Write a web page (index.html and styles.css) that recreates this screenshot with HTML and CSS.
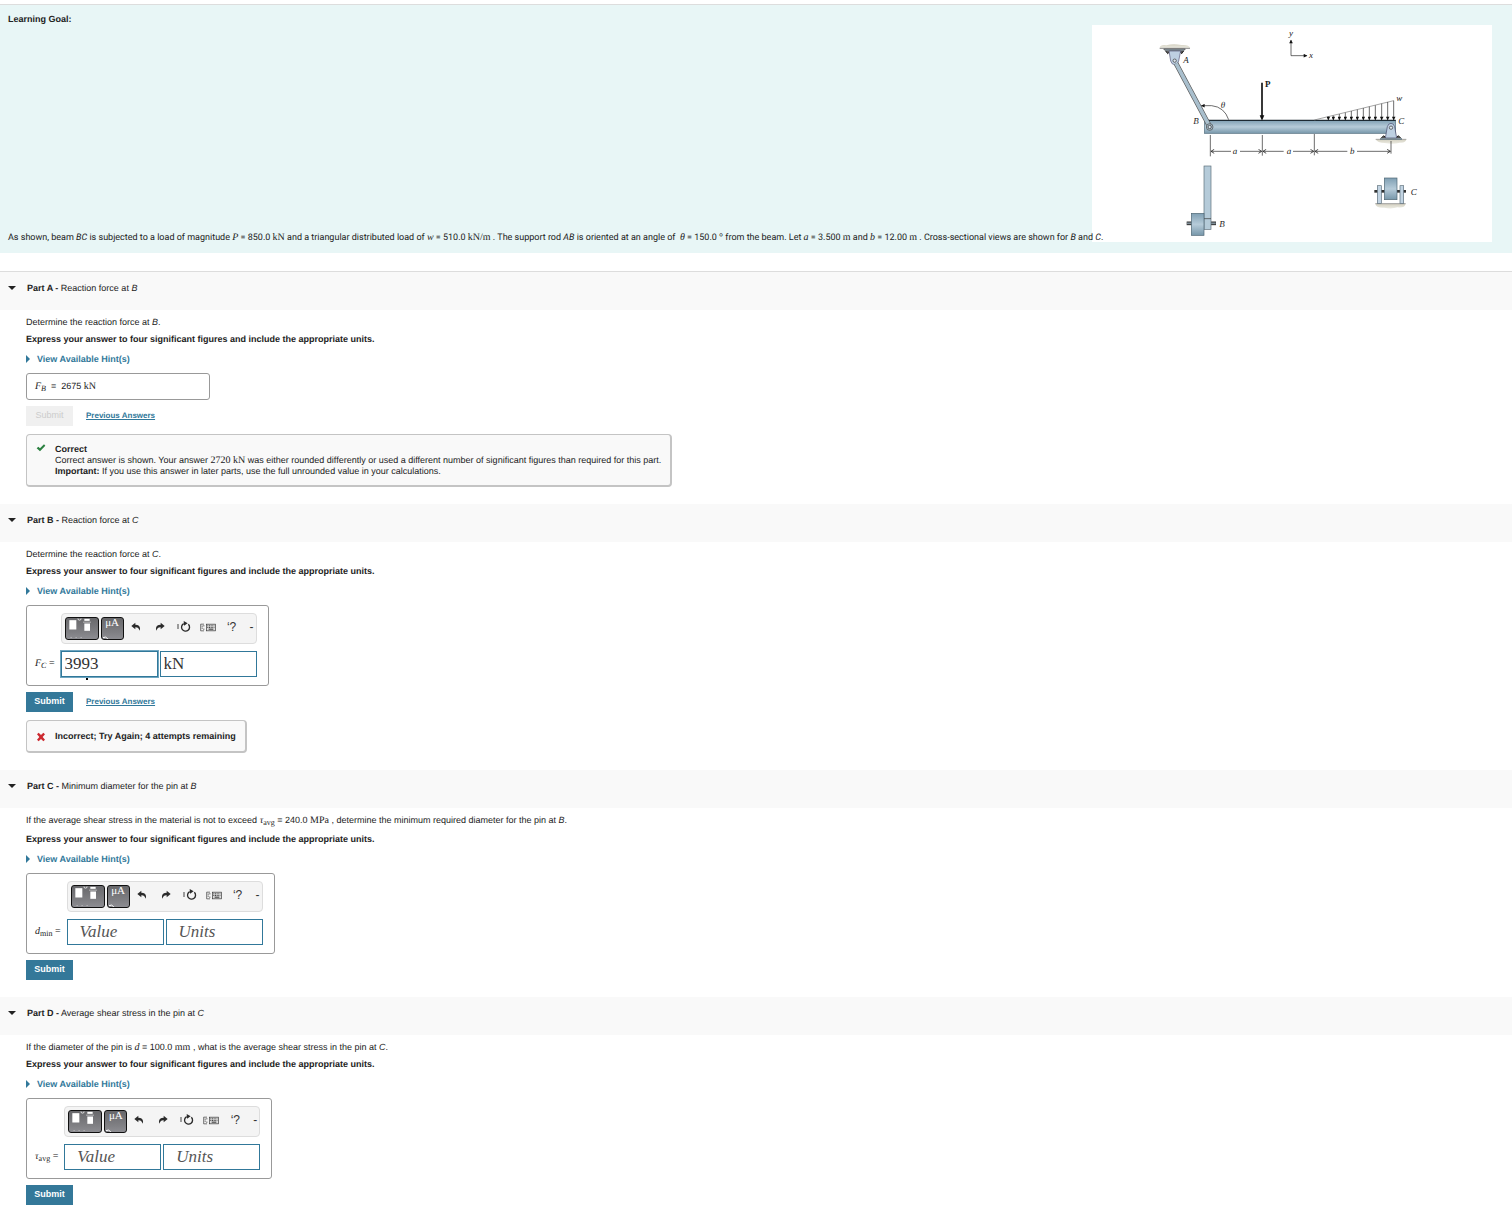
FILE: index.html
```
<!DOCTYPE html>
<html lang="en">
<head>
    <meta charset="utf-8">
    <meta name="viewport" content="width=device-width, initial-scale=1.0">
    <title>Beam BC - Reaction forces and shear stress</title>
    <link rel="stylesheet" href="styles.css">
</head>
<body>
    <!-- shared toolbar icons -->
    <svg class="sprite" aria-hidden="true">
        <symbol id="i-template" viewBox="3 3 96 60">
            <rect x="13" y="8" width="21" height="28" fill="#fff"/>
            <path d="M39 3v3q5 4 9 0V3" fill="none" stroke="#ddd" stroke-width="3"/>
            <rect x="58" y="4" width="16" height="6" fill="#fff"/>
            <path d="M54 14h24" stroke="#ddd" stroke-width="2"/>
            <rect x="58" y="18" width="17" height="22" fill="#fff"/>
            <path d="M16 60h5M31 60h5M46 60h5" stroke="#bbb" stroke-width="2"/>
        </symbol>
        <symbol id="i-hook" viewBox="0 0 24 12">
            <path d="M3 5q8-5 14 3l1 3" fill="none" stroke="#fff" stroke-width="3"/>
        </symbol>
        <symbol id="i-undo" viewBox="0 0 30 30">
            <path d="M13 2L1 12l12 10v-6q9-1 13 10q5-17-13-18z" fill="#2b2b2b"/>
        </symbol>
        <symbol id="i-redo" viewBox="0 0 30 30">
            <path d="M17 2l12 10-12 10v-6q-9-1-13 10Q-1 9 17 8z" fill="#2b2b2b"/>
        </symbol>
        <symbol id="i-reset" viewBox="0 0 42 36">
            <path d="M3 9v15" stroke="#444" stroke-width="3"/>
            <path d="M34 10a12 12 0 1 1-14-2" fill="none" stroke="#2b2b2b" stroke-width="4"/>
            <path d="M20 0l12 7-11 7z" fill="#2b2b2b"/>
        </symbol>
        <symbol id="i-keyboard" viewBox="0 0 48 26">
            <path d="M12 3H2v20h10" fill="none" stroke="#333" stroke-width="2"/>
            <path d="M5 9h3M5 15h3M10 8h3M10 18h3" stroke="#333" stroke-width="3"/>
            <rect x="19" y="3" width="27" height="20" fill="#ddd" stroke="#333" stroke-width="2"/>
            <path d="M22 8h21M22 13h21" stroke="#444" stroke-width="3" stroke-dasharray="3 2"/>
            <path d="M26 18h14" stroke="#333" stroke-width="3"/>
        </symbol>
    </svg>

    <section class="goal">
        <h2 class="goal-title">Learning Goal:</h2>
        <div class="goal-row">
            <p class="goal-text">As shown, beam <i>BC</i> is subjected to a load of magnitude <span class="math"><i>P</i></span> = 850.0 <span class="math">kN</span> and a triangular distributed load of <span class="math"><i>w</i></span> = 510.0 <span class="math">kN/m</span> . The support rod <i>AB</i> is oriented at an angle of &nbsp;<span class="math"><i>θ</i></span> = 150.0 <span class="math">°</span> from the beam. Let <span class="math"><i>a</i></span> = 3.500 <span class="math">m</span> and <span class="math"><i>b</i></span> = 12.00 <span class="math">m</span> . Cross-sectional views are shown for <i>B</i> and <i>C</i>.</p>
            <svg class="figure" viewBox="0 15 1200 651" role="img" aria-label="Beam BC held by rod AB and a pin at C">
                <defs>
                    <linearGradient id="steel" x2="0" y2="1">
                        <stop offset="0" stop-color="#7f9fb3"/>
                        <stop offset=".5" stop-color="#b6cbd9"/>
                        <stop offset="1" stop-color="#7797aa"/>
                    </linearGradient>
                    <linearGradient id="ground" x2="0" y2="1">
                        <stop offset="0" stop-color="#d3d0c0"/>
                        <stop offset="1" stop-color="#ecebe3"/>
                    </linearGradient>
                    <marker id="tip" viewBox="0 0 10 10" refX="9" refY="5" markerUnits="userSpaceOnUse" markerWidth="13" markerHeight="11" orient="auto-start-reverse">
                        <path d="M0 0l10 5-10 5z" fill="#111"/>
                    </marker>
                    <marker id="open" viewBox="0 0 10 10" refX="9" refY="5" markerUnits="userSpaceOnUse" markerWidth="12" markerHeight="14" orient="auto-start-reverse">
                        <path d="M1 0l8 5-8 5" fill="none" stroke="#222" stroke-width="2"/>
                    </marker>
                </defs>

                <!-- axes -->
                <path d="M597 60v47h48" class="thin" marker-start="url(#tip)" marker-end="url(#tip)"/>

                <!-- support A -->
                <path d="M203 84q2-11 20-8q20-6 45-1q22-2 27 9z" fill="url(#ground)"/>
                <path d="M203 85h91" stroke="#888" stroke-width="3"/>
                <path d="M215 87h65l-6 6h-53z" fill="#91a2ad" stroke="#444" stroke-width="2"/>
                <path d="M221 93l6 8 7-7M262 93l7 8 6-8" fill="#555" stroke="#222" stroke-width="3"/>
                <path d="M231 93h35l-6 30q-3 11-12 11t-12-11z" fill="#bed0e2" stroke="#557" stroke-width="2"/>

                <!-- beam -->
                <rect x="337" y="301" width="574" height="39" fill="url(#steel)" stroke="#55707f" stroke-width="2"/>
                <path d="M337 301h574" stroke="#1d2a33" stroke-width="4"/>

                <!-- rod AB -->
                <path d="M252 130L350 314" stroke="#555" stroke-width="15"/>
                <path d="M252 130L350 314" stroke="#a9bfcd" stroke-width="11"/>
                <circle cx="248" cy="122" r="5" fill="#dde6ee" stroke="#333" stroke-width="2"/>
                <circle cx="353" cy="321" r="10" fill="#a9bfcd" stroke="#444" stroke-width="2"/>
                <circle cx="353" cy="321" r="5" fill="#dde6ee" stroke="#222" stroke-width="2"/>

                <!-- angle and load P -->
                <path d="M328 257h31q38 4 51 42" fill="none" stroke="#222" stroke-width="2" marker-start="url(#tip)"/>
                <path d="M510 188v103" stroke="#111" stroke-width="5"/>
                <path d="M503 286h14l-7 16z" fill="#111"/>

                <!-- distributed load w -->
                <path d="M667 300L905 242" stroke="#777" stroke-width="2"/>
                <g class="thin">
                    <path d="M709 290v10" marker-end="url(#tip)"/>
                    <path d="M724 287v13" marker-end="url(#tip)"/>
                    <path d="M742 282v18" marker-end="url(#tip)"/>
                    <path d="M760 278v22" marker-end="url(#tip)"/>
                    <path d="M778 273v27" marker-end="url(#tip)"/>
                    <path d="M796 269v31" marker-end="url(#tip)"/>
                    <path d="M814 264v36" marker-end="url(#tip)"/>
                    <path d="M832 260v40" marker-end="url(#tip)"/>
                    <path d="M850 256v44" marker-end="url(#tip)"/>
                    <path d="M869 251v49" marker-end="url(#tip)"/>
                    <path d="M887 246v54" marker-end="url(#tip)"/>
                    <path d="M905 242v58" marker-end="url(#tip)"/>
                </g>

                <!-- support C -->
                <path d="M851 358h92q-2 12-20 10q-20 6-45 1q-22 0-27-11z" fill="url(#ground)"/>
                <path d="M851 358h92" stroke="#888" stroke-width="2"/>
                <path d="M868 354l7-7 7 7M912 354l7-7 7 7" fill="#555" stroke="#222" stroke-width="3"/>
                <path d="M880 354l6-34q3-10 11-10t11 10l6 34z" fill="#bed0e2" stroke="#446" stroke-width="2"/>
                <path d="M864 357h66" stroke="#6c7d88" stroke-width="5"/>
                <circle cx="897" cy="323" r="5" fill="#dde6ee" stroke="#333" stroke-width="2"/>

                <!-- dimensions -->
                <path d="M355 345v64M511 345v62M667 342v64M897 363v38" class="thin"/>
                <path d="M417 394h-60" class="thin" marker-end="url(#open)"/>
                <path d="M444 394h65" class="thin" marker-end="url(#open)"/>
                <path d="M575 394h-62" class="thin" marker-end="url(#open)"/>
                <path d="M603 394h62" class="thin" marker-end="url(#open)"/>
                <path d="M766 394h-97" class="thin" marker-end="url(#open)"/>
                <path d="M795 394h100" class="thin" marker-end="url(#open)"/>

                <!-- section at B -->
                <path d="M284 610h88" stroke="#333" stroke-width="11"/>
                <path d="M285 610h86" stroke="#81909a" stroke-width="5"/>
                <rect x="336" y="438" width="21" height="190" fill="#b5cbd9" stroke="#5b6d78" stroke-width="2"/>
                <path d="M336 596h21" stroke="#333" stroke-width="2"/>
                <rect x="298" y="580" width="38" height="66" fill="url(#steel)" stroke="#4d6572" stroke-width="2"/>

                <!-- section at C -->
                <path d="M850 551h91q-3 14-24 11q-20 6-40 1q-25 2-27-12z" fill="url(#ground)"/>
                <path d="M850 551h91" stroke="#777" stroke-width="2"/>
                <path d="M847 514h95" stroke="#333" stroke-width="8"/>
                <rect x="856" y="497" width="12" height="53" fill="#c2d4e3" stroke="#5b6d78" stroke-width="2"/>
                <rect x="924" y="497" width="11" height="53" fill="#c2d4e3" stroke="#5b6d78" stroke-width="2"/>
                <rect x="877" y="474" width="38" height="65" fill="url(#steel)" stroke="#4d6572" stroke-width="2"/>

                <g class="fig-label">
                    <text x="591" y="49">y</text>
                    <text x="651" y="114">x</text>
                    <text x="274" y="128">A</text>
                    <text x="386" y="263">θ</text>
                    <text x="304" y="311">B</text>
                    <text x="519" y="201" class="bold">P</text>
                    <text x="913" y="242">w</text>
                    <text x="919" y="311">C</text>
                    <text x="422" y="401">a</text>
                    <text x="584" y="401">a</text>
                    <text x="774" y="402">b</text>
                    <text x="382" y="622">B</text>
                    <text x="956" y="524">C</text>
                </g>
            </svg>
        </div>
    </section>

    <main class="parts">
        <section class="part">
            <h2 class="part-header"><span class="caret"></span><span><b>Part A -</b> Reaction force at <i>B</i></span></h2>
            <div class="part-body">
                <p>Determine the reaction force at <i>B</i>.</p>
                <p class="express">Express your answer to four significant figures and include the appropriate units.</p>
                <a class="hint" href="#">View Available Hint(s)</a>
                <div class="answer-fixed"><span class="math"><i>F<sub>B</sub></i></span>&nbsp; = &nbsp;2675 <span class="math">kN</span></div>
                <div class="actions">
                    <button class="submit" disabled>Submit</button>
                    <a class="previous" href="#">Previous Answers</a>
                </div>
                <div class="feedback">
                    <svg class="mark" viewBox="0 0 30 24"><path d="M2 13l5-5 5 5L24 1l4 4-16 17z" fill="#2b8040"/></svg>
                    <div>
                        <h3>Correct</h3>
                        <p>Correct answer is shown. Your answer <span class="math">2720 kN</span> was either rounded differently or used a different number of significant figures than required for this part.</p>
                        <p><b>Important:</b> If you use this answer in later parts, use the full unrounded value in your calculations.</p>
                    </div>
                </div>
            </div>
        </section>

        <section class="part">
            <h2 class="part-header"><span class="caret"></span><span><b>Part B -</b> Reaction force at <i>C</i></span></h2>
            <div class="part-body">
                <p>Determine the reaction force at <i>C</i>.</p>
                <p class="express">Express your answer to four significant figures and include the appropriate units.</p>
                <a class="hint" href="#">View Available Hint(s)</a>
                <div class="answer">
                    <div class="toolbar">
                        <button class="key wide" aria-label="Templates"><svg><use href="#i-template"/></svg></button>
                        <button class="key" aria-label="Units">μA<svg><use href="#i-hook"/></svg></button>
                        <button class="tool" aria-label="Undo"><svg><use href="#i-undo"/></svg></button>
                        <button class="tool" aria-label="Redo"><svg><use href="#i-redo"/></svg></button>
                        <button class="tool reset" aria-label="Reset"><svg><use href="#i-reset"/></svg></button>
                        <button class="tool keyboard" aria-label="Keyboard shortcuts"><svg><use href="#i-keyboard"/></svg></button>
                        <button class="tool">‘?</button>
                        <button class="tool more">-</button>
                    </div>
                    <label class="math" for="fc"><i>F<sub>C</sub></i> =</label>
                    <div class="fields">
                        <input class="field active" id="fc" value="3993">
                        <input class="field" aria-label="Units" value="kN">
                        <span class="dot"></span>
                    </div>
                </div>
                <div class="actions">
                    <button class="submit">Submit</button>
                    <a class="previous" href="#">Previous Answers</a>
                </div>
                <div class="feedback short">
                    <svg class="mark" viewBox="0 0 30 30"><path d="M3 7l5-5 7 7 7-7 5 5-7 8 7 8-5 5-7-7-7 7-5-5 7-8z" fill="#cc2a30"/></svg>
                    <b>Incorrect; Try Again; 4 attempts remaining</b>
                </div>
            </div>
        </section>

        <section class="part">
            <h2 class="part-header"><span class="caret"></span><span><b>Part C -</b> Minimum diameter for the pin at <i>B</i></span></h2>
            <div class="part-body">
                <p class="tall">If the average shear stress in the material is not to exceed <span class="math"><i>τ</i><sub>avg</sub></span> = 240.0 <span class="math">MPa</span> , determine the minimum required diameter for the pin at <i>B</i>.</p>
                <p class="express">Express your answer to four significant figures and include the appropriate units.</p>
                <a class="hint" href="#">View Available Hint(s)</a>
                <div class="answer">
                    <div class="toolbar">
                        <button class="key wide" aria-label="Templates"><svg><use href="#i-template"/></svg></button>
                        <button class="key" aria-label="Units">μA<svg><use href="#i-hook"/></svg></button>
                        <button class="tool" aria-label="Undo"><svg><use href="#i-undo"/></svg></button>
                        <button class="tool" aria-label="Redo"><svg><use href="#i-redo"/></svg></button>
                        <button class="tool reset" aria-label="Reset"><svg><use href="#i-reset"/></svg></button>
                        <button class="tool keyboard" aria-label="Keyboard shortcuts"><svg><use href="#i-keyboard"/></svg></button>
                        <button class="tool">‘?</button>
                        <button class="tool more">-</button>
                    </div>
                    <label class="math" for="dmin"><i>d</i><sub>min</sub> =</label>
                    <div class="fields">
                        <input class="field" id="dmin" placeholder="Value">
                        <input class="field" aria-label="Units" placeholder="Units">
                    </div>
                </div>
                <div class="actions">
                    <button class="submit">Submit</button>
                </div>
            </div>
        </section>

        <section class="part">
            <h2 class="part-header"><span class="caret"></span><span><b>Part D -</b> Average shear stress in the pin at <i>C</i></span></h2>
            <div class="part-body">
                <p>If the diameter of the pin is <span class="math"><i>d</i></span> = 100.0 <span class="math">mm</span> , what is the average shear stress in the pin at <i>C</i>.</p>
                <p class="express">Express your answer to four significant figures and include the appropriate units.</p>
                <a class="hint" href="#">View Available Hint(s)</a>
                <div class="answer">
                    <div class="toolbar">
                        <button class="key wide" aria-label="Templates"><svg><use href="#i-template"/></svg></button>
                        <button class="key" aria-label="Units">μA<svg><use href="#i-hook"/></svg></button>
                        <button class="tool" aria-label="Undo"><svg><use href="#i-undo"/></svg></button>
                        <button class="tool" aria-label="Redo"><svg><use href="#i-redo"/></svg></button>
                        <button class="tool reset" aria-label="Reset"><svg><use href="#i-reset"/></svg></button>
                        <button class="tool keyboard" aria-label="Keyboard shortcuts"><svg><use href="#i-keyboard"/></svg></button>
                        <button class="tool">‘?</button>
                        <button class="tool more">-</button>
                    </div>
                    <label class="math" for="tavg"><i>τ</i><sub>avg</sub> =</label>
                    <div class="fields">
                        <input class="field" id="tavg" placeholder="Value">
                        <input class="field" aria-label="Units" placeholder="Units">
                    </div>
                </div>
                <div class="actions">
                    <button class="submit">Submit</button>
                </div>
            </div>
        </section>
    </main>
</body>
</html>
```
FILE: styles.css
```
* {
    box-sizing: border-box;
}
body {
    margin: 4px 0 0;
    font-family: "Liberation Sans", Arial, sans-serif;
    font-size: 9px;
    line-height: 12px;
    text-rendering: geometricPrecision;
    color: #222;
    background: #fff;
}
h2, h3, p {
    margin: 0;
    font-size: 9px;
}
button, input {
    font-family: inherit;
    padding: 0;
    margin: 0;
}
svg {
    display: block;
}
.sprite {
    display: none;
}
.math {
    font-family: "Liberation Serif", "Times New Roman", serif;
    font-size: 10px;
    line-height: 1px;
}
.math sub {
    font-size: 8px;
    line-height: 1px;
    vertical-align: -2px;
}

/* learning goal */
.goal {
    background: #e8f6f6;
    border-top: 1px solid #ddd;
    padding: 8px 20px 11px 8px;
}
.goal-row {
    display: flex;
    justify-content: space-between;
    align-items: flex-end;
}
.goal-text {
    position: relative;
    z-index: 1;
    flex: 1;
    min-width: 0;
    font-family: Roboto, "Liberation Sans", Arial, sans-serif;
    line-height: 8px;
    white-space: nowrap;
}
.figure {
    width: 400px;
    height: 217px;
    flex: none;
    background: #fff;
}
.thin {
    fill: none;
    stroke: #222;
    stroke-width: 2px;
}
.fig-label {
    font-family: "Liberation Serif", serif;
    font-size: 27px;
    font-style: italic;
    fill: #222;
}
.fig-label .bold {
    font-style: normal;
    font-weight: bold;
}

/* parts */
.parts {
    margin-top: 18px;
    border-top: 1px solid #ddd;
}
.part-header {
    display: flex;
    align-items: flex-start;
    gap: 11px;
    height: 38px;
    padding: 10px 8px;
    background: #f9f9f9;
    font-weight: normal;
}
.caret {
    margin-top: 4px;
    border: 4px solid transparent;
    border-top-color: #222;
    border-bottom: 0;
}
.part-body {
    padding: 6px 26px 17px;
}
.part-body .tall {
    margin-bottom: 7px;
}
.express {
    margin-top: 5px;
    font-weight: bold;
}
.hint {
    display: flex;
    align-items: center;
    gap: 7px;
    width: max-content;
    margin-top: 8px;
    color: #31789a;
    font-weight: bold;
    text-decoration: none;
}
.hint::before {
    content: "";
    border: 4px solid transparent;
    border-left-color: #31789a;
    border-right: 0;
}
.answer-fixed {
    width: 184px;
    margin-top: 8px;
    padding: 6px 8px 7px;
    border: 1px solid #999;
    border-radius: 3px;
}
.answer {
    display: grid;
    grid-template-columns: auto 196px;
    column-gap: 6px;
    row-gap: 7px;
    align-items: center;
    width: max-content;
    margin-top: 8px;
    padding: 7px 11px 8px 8px;
    border: 1px solid #999;
    border-radius: 3px;
}
.toolbar {
    grid-column: 2;
    display: flex;
    height: 31px;
    padding: 3px 0 3px 3px;
    background: #f4f4f4;
    border: 1px solid #ddd;
    border-radius: 4px;
}
.key {
    flex: none;
    width: 23px;
    height: 23px;
    overflow: hidden;
    border: 1px solid #111;
    border-radius: 3px;
    background: linear-gradient(#68686b, #808084 70%, #8d8d92);
    color: #fff;
    font-family: "Liberation Serif", serif;
    font-size: 11px;
    line-height: 9px;
    text-align: center;
}
.key svg {
    width: 8px;
    height: 4px;
    margin-top: 9px;
}
.key.wide {
    width: 34px;
    margin-right: 2px;
}
.key.wide svg {
    width: 32px;
    height: 21px;
    margin-top: 0;
}
.tool {
    display: flex;
    flex: none;
    align-items: center;
    justify-content: center;
    width: 24px;
    height: 20px;
    border: 0;
    background: none;
    color: #333;
    font-size: 12px;
}
.tool svg {
    width: 10px;
    height: 10px;
}
.tool.reset svg {
    width: 14px;
    height: 12px;
}
.tool.keyboard svg {
    width: 16px;
    height: 9px;
}
.tool.more {
    width: 16px;
}
.fields {
    position: relative;
    display: flex;
    gap: 2px;
}
.field {
    flex: 1;
    min-width: 0;
    height: 26px;
    padding: 0 3px;
    border: 1px solid #31789a;
    color: #333;
    background: #fff;
    font-family: "Liberation Serif", "Times New Roman", serif;
    font-size: 17px;
}
.field.active {
    box-shadow: 0 0 0 1px #6fa6c0;
}
.field::placeholder {
    color: #555;
    font-style: italic;
    opacity: 1;
}
.field:placeholder-shown {
    padding-left: 12px;
}
.dot {
    position: absolute;
    left: 25px;
    bottom: -3px;
    width: 2px;
    height: 2px;
    background: #000;
}
.actions {
    display: flex;
    align-items: center;
    gap: 13px;
    margin-top: 6px;
}
.submit {
    width: 47px;
    height: 20px;
    padding-bottom: 2px;
    border: 0;
    background: #347899;
    color: #fff;
    font-size: 9px;
    font-weight: bold;
}
.submit:disabled {
    background: #f0f0f0;
    color: #ccc;
    font-weight: normal;
}
.previous {
    color: #31789a;
    font-size: 8px;
    font-weight: bold;
}
.feedback {
    display: flex;
    gap: 9px;
    width: max-content;
    margin-top: 8px;
    padding: 8px 9px;
    background: #f9f9f9;
    border: 1px solid #c4c4c4;
    border-right-width: 2px;
    border-bottom-width: 2px;
    border-radius: 4px;
    line-height: 11px;
}
.feedback h3 {
    line-height: 12px;
}
.feedback.short {
    align-items: center;
    padding: 10px 9px 9px;
}
.mark {
    width: 10px;
    height: 10px;
    flex: none;
}
```
